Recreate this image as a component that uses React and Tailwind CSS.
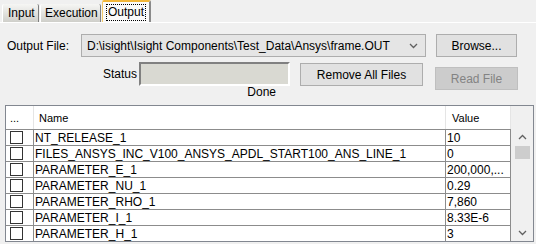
import React from 'react';

const rows = [
  { name: 'NT_RELEASE_1', value: '10' },
  { name: 'FILES_ANSYS_INC_V100_ANSYS_APDL_START100_ANS_LINE_1', value: '0' },
  { name: 'PARAMETER_E_1', value: '200,000,...' },
  { name: 'PARAMETER_NU_1', value: '0.29' },
  { name: 'PARAMETER_RHO_1', value: '7,860' },
  { name: 'PARAMETER_I_1', value: '8.33E-6' },
  { name: 'PARAMETER_H_1', value: '3' },
];

function Chevron({ up }) {
  return (
    <svg width="9" height="6" viewBox="0 0 9 6">
      <path d={up ? 'M1 5 L4.5 1.5 L8 5' : 'M1 1 L4.5 4.5 L8 1'} fill="none" stroke="#606060" strokeWidth="1.3" />
    </svg>
  );
}

export default function App() {
  return (
    <div className="w-[536px] h-[244px] overflow-hidden bg-[#f0f0f0] text-[12px] leading-[14px] text-black" style={{ fontFamily: '"Liberation Sans", Arial, sans-serif' }}>
      {/* tabs */}
      <div className="flex items-end h-[22px] pl-[2px]">
        <div className="w-[37px] h-[18px] flex items-center pl-[5px] bg-gradient-to-b from-[#f6f6f4] to-[#cfcfca] border-l border-white border-r border-r-[#7f7f7f] rounded-t-[2px]">Input</div>
        <div className="w-[61px] h-[18px] flex items-center pl-[4px] ml-[1px] bg-gradient-to-b from-[#f6f6f4] to-[#cfcfca] border-l border-white border-r border-r-[#7f7f7f] rounded-t-[2px]">Execution</div>
        <div className="w-[49px] h-[22px] flex items-center justify-center ml-[1px] bg-[#fafafa] border-t-2 border-t-[#f2b73a] border-l border-l-[#f2c96a] border-r-2 border-r-[#8a8a8a] rounded-t-[2px]">
          <span className="border border-dotted border-black px-[1px] leading-[15px]">Output</span>
        </div>
      </div>
      <div className="h-[1px] bg-white" />

      {/* output file row */}
      <div className="flex items-center mt-[11px] pl-[7px] h-[23px]">
        <div className="w-[74px]">Output File:</div>
        <div className="w-[345px] h-[23px] flex items-center justify-between pl-[5px] pr-[7px] bg-[#e5e5e5] border border-[#adadad]">
          <span>D:\isight\Isight Components\Test_Data\Ansys\frame.OUT</span>
          <Chevron />
        </div>
        <div className="ml-[10px] w-[81px] h-[23px] flex items-center justify-center bg-[#e1e1e1] border border-[#adadad]">Browse...</div>
      </div>

      {/* status row */}
      <div className="flex items-start mt-[5px]">
        <div className="w-[139px] h-[24px] flex items-center justify-end pr-[2px]">Status</div>
        <div className="flex flex-col w-[151px]">
          <div className="h-[24px] bg-[#d9d9d2] border-t-2 border-l-2 border-t-[#808080] border-l-[#808080] border-b-2 border-r-2 border-b-white border-r-white" />
          <div className="text-right pr-[14px] leading-[13px]">Done</div>
        </div>
        <div className="ml-[10px] mt-[1px] w-[123px] h-[23px] flex items-center justify-center bg-[#e1e1e1] border border-[#adadad]">Remove All Files</div>
        <div className="ml-[12px] mt-[5px] w-[83px] h-[23px] flex items-center justify-center bg-[#cccccc] border border-[#bfbfbf] text-[#838383]">Read File</div>
      </div>

      {/* table */}
      <div className="mt-[6px] ml-[5px] w-[529px] h-[137px] border border-[#828790] bg-white flex flex-col">
        <div className="flex h-[23px] text-[11px]">
          <div className="w-[28px] flex items-center pl-[4px] border-r border-[#e5e5e5]">...</div>
          <div className="w-[412px] flex items-center pl-[5px] border-r border-[#e5e5e5]">Name</div>
          <div className="w-[65px] flex items-center pl-[6px] border-r border-[#e5e5e5]">Value</div>
          <div className="flex-1 bg-[#f0f0f0]" />
        </div>
        <div className="flex flex-1">
          <div className="flex flex-col w-[505px]">
            {rows.map((r) => (
              <div key={r.name} className="flex h-[16px] border-t border-[#8c8c8c]">
                <div className="w-[28px] flex items-center pl-[4px] border-r border-[#8c8c8c]">
                  <div className="w-[13px] h-[13px] border border-[#333333] bg-white" />
                </div>
                <div className="w-[412px] flex items-center pl-[1px] border-r border-[#8c8c8c] whitespace-nowrap overflow-hidden">{r.name}</div>
                <div className="w-[65px] flex items-center pl-[1px] border-r border-[#8c8c8c] whitespace-nowrap overflow-hidden">{r.value}</div>
              </div>
            ))}
          </div>
          <div className="flex-1 bg-[#f0f0f0] flex flex-col items-center justify-between py-[5px]">
            <div className="flex flex-col items-center">
              <Chevron up />
              <div className="w-[15px] h-[13px] bg-[#cdcdcd] mt-[6px]" />
            </div>
            <Chevron />
          </div>
        </div>
      </div>
    </div>
  );
}
